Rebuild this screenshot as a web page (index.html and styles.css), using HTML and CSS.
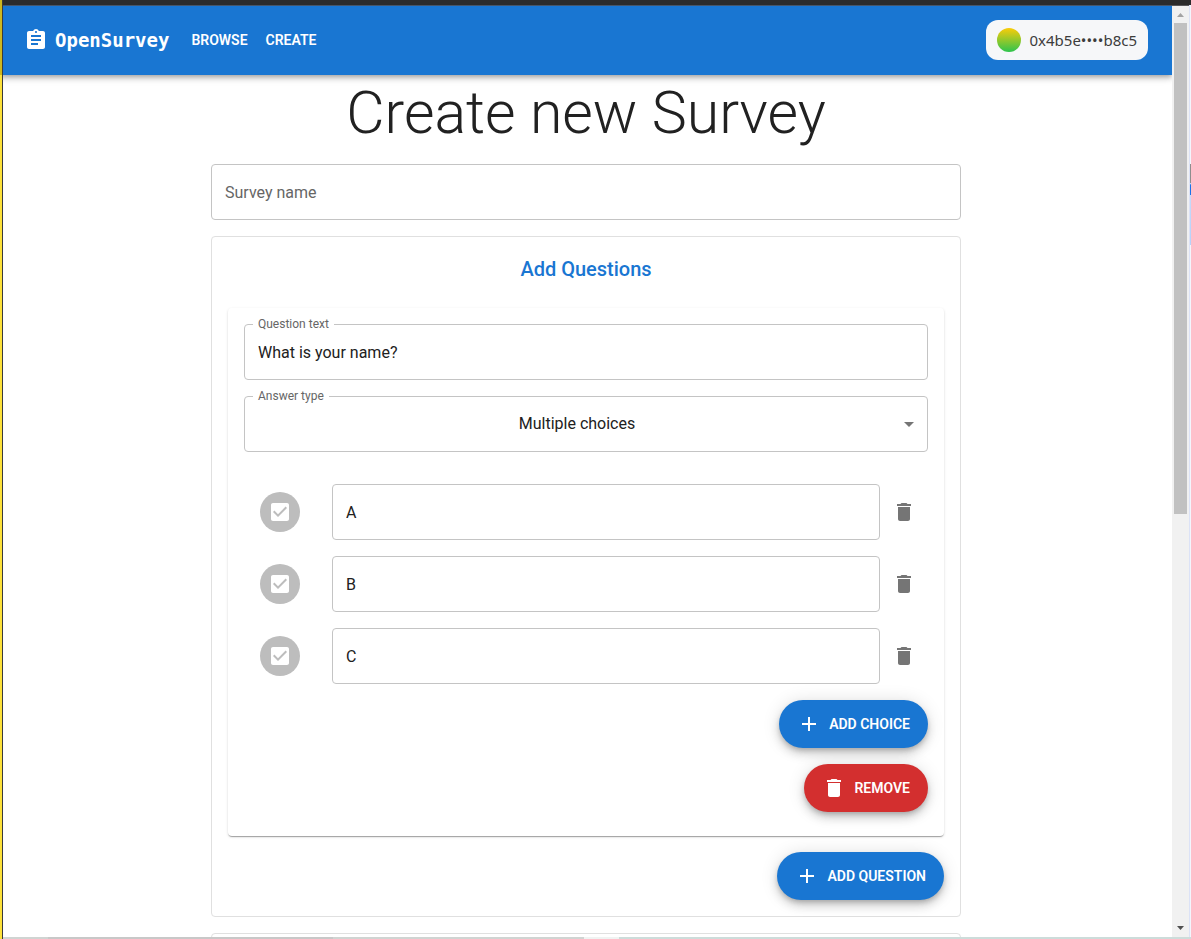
FILE: index.html
```html
<!DOCTYPE html>
<html lang="en">
<head>
<meta charset="utf-8">
<meta name="viewport" content="width=device-width, initial-scale=1">
<title>OpenSurvey</title>
<link rel="stylesheet" href="styles.css">
</head>
<body>
<svg class="sprite" aria-hidden="true">
  <symbol id="icon-survey" viewBox="0 0 24 24"><path d="M19 3h-4.180C14.400 1.840 13.300 1 12 1c-1.300 0-2.400.84-2.820 2H5c-1.100 0-2 .9-2 2v14c0 1.100.9 2 2 2h14c1.100 0 2-.9 2-2V5c0-1.100-.9-2-2-2zm-7 0c.55 0 1 .45 1 1s-.45 1-1 1-1-.45-1-1 .45-1 1-1zm2 14H7v-2h7v2zm3-4H7v-2h10v2zm0-4H7V7h10v2z"/></symbol>
  <symbol id="icon-plus" viewBox="0 0 24 24"><path d="M19 13h-6v6h-2v-6H5v-2h6V5h2v6h6v2z"/></symbol>
  <symbol id="icon-trash" viewBox="0 0 24 24"><path d="M6 19c0 1.100.9 2 2 2h8c1.100 0 2-.9 2-2V7H6v12zM19 4h-3.500l-1-1h-5l-1 1H5v2h14V4z"/></symbol>
  <symbol id="icon-check" viewBox="0 0 24 24"><path fill-rule="evenodd" d="M19 3H5c-1.110 0-2 .9-2 2v14c0 1.100.89 2 2 2h14c1.110 0 2-.9 2-2V5c0-1.100-.89-2-2-2zm-9 14l-5-5 1.410-1.410L10 14.170l7.590-7.590L19 8l-9 9z"/></symbol>
  <symbol id="icon-arrow" viewBox="0 0 24 24"><path d="M7 10l5 5 5-5z"/></symbol>
</svg>
<div class="window">
  <div class="window-top"></div>
  <div class="viewport">
    <div class="page">
      <header class="appbar">
        <a class="brand" href="#"><svg class="icon"><use href="#icon-survey"/></svg>OpenSurvey</a>
        <nav class="nav"><a href="#">BROWSE</a><a href="#">CREATE</a></nav>
        <button class="wallet" type="button"><span class="wallet-avatar"></span>0x4b5e••••b8c5</button>
      </header>
      <main class="content">
        <h1 class="title">Create new Survey</h1>
        <form class="stack">
          <div class="field"><input class="control" type="text" aria-label="Survey name" placeholder="Survey name"></div>
          <section class="card">
            <h2 class="card-title">Add Questions</h2>
            <div class="paper">
              <div class="field">
                <label class="label" for="question">Question text</label>
                <input class="control" id="question" type="text" value="What is your name?">
              </div>
              <div class="field">
                <label class="label" for="answer">Answer type</label>
                <select class="control select" id="answer"><option>Multiple choices</option></select>
                <svg class="icon select-arrow"><use href="#icon-arrow"/></svg>
              </div>
              <div class="choices">
                <div class="choice">
                  <span class="avatar"><svg class="icon"><use href="#icon-check"/></svg></span>
                  <input class="control" type="text" aria-label="Choice 1" value="A">
                  <button class="delete" type="button" aria-label="Delete choice 1"><svg class="icon"><use href="#icon-trash"/></svg></button>
                </div>
                <div class="choice">
                  <span class="avatar"><svg class="icon"><use href="#icon-check"/></svg></span>
                  <input class="control" type="text" aria-label="Choice 2" value="B">
                  <button class="delete" type="button" aria-label="Delete choice 2"><svg class="icon"><use href="#icon-trash"/></svg></button>
                </div>
                <div class="choice">
                  <span class="avatar"><svg class="icon"><use href="#icon-check"/></svg></span>
                  <input class="control" type="text" aria-label="Choice 3" value="C">
                  <button class="delete" type="button" aria-label="Delete choice 3"><svg class="icon"><use href="#icon-trash"/></svg></button>
                </div>
              </div>
              <button class="fab" type="button"><svg class="icon"><use href="#icon-plus"/></svg>ADD CHOICE</button>
              <button class="fab fab-danger" type="button"><svg class="icon"><use href="#icon-trash"/></svg>REMOVE</button>
            </div>
            <button class="fab" type="button"><svg class="icon"><use href="#icon-plus"/></svg>ADD QUESTION</button>
          </section>
          <section class="card"></section>
        </form>
      </main>
    </div>
    <div class="scrollbar" aria-hidden="true">
      <svg class="scroll-arrow scroll-arrow-off" viewBox="0 0 17 17"><path d="M5 11h7L8.500 7z"/></svg>
      <div class="scroll-track"><div class="scroll-thumb"></div></div>
      <svg class="scroll-arrow" viewBox="0 0 17 17"><path d="M5 6h7L8.500 10z"/></svg>
    </div>
    <div class="window-right"></div>
  </div>
  <div class="window-bottom"></div>
  <div class="window-left"></div>
</div>
</body>
</html>
```
FILE: styles.css
```css
* { box-sizing: border-box; }

body {
  margin: 0;
  background: #fff;
  color: #212121;
  font: 400 16px/24px Roboto, "Liberation Sans", sans-serif;
}

button, input, select { font: inherit; color: inherit; }
a { color: inherit; text-decoration: none; }
.sprite { display: none; }

.icon {
  display: block;
  flex: none;
  width: 24px;
  height: 24px;
  fill: currentColor;
}

/* Window frame */
.window {
  position: relative;
  display: flex;
  flex-direction: column;
  height: 100vh;
  overflow: hidden;
}
.window-top { flex: none; height: 5px; background: #2b2b2b; }
.window-bottom {
  flex: none;
  height: 2px;
  background: linear-gradient(90deg, #d0d4d2 4%, #c8c8c8 4%, #c8c8c8 28%, #d0d4d2 28%, #d0d4d2 49%, #f0f3f2 49%, #f0f3f2 52%, #cddcda 52%);
}
.window-left {
  position: absolute;
  inset: 0 auto 0 0;
  width: 3px;
  border-right: 1px solid #3a3a3a;
  background: linear-gradient(#cdb81f 75px, #fde13a 75px);
}
.window-right {
  flex: none;
  width: 2px;
  border-left: 1px solid #dbe2f6;
  background: linear-gradient(#f3f6fd 159px, #8e8e8e 159px, #8e8e8e 178px, #f3f6fd 178px, #1a73e8 180px, #1a73e8 190px, #c5dafa 190px, #b5d2fa 240px, #f3f6fd 240px);
}
.viewport { display: flex; flex: 1; min-height: 0; }
.page { flex: 1; min-width: 0; overflow: hidden; }

.scrollbar {
  display: flex;
  flex-direction: column;
  flex: none;
  width: 17px;
  border-top: 1px solid #58585a;
  background: #f1f1f1;
}
.scroll-arrow { display: block; width: 17px; height: 17px; fill: #505050; }
.scroll-arrow-off { fill: #a3a3a3; }
.scroll-track { flex: 1; padding: 0 2px; }
.scroll-thumb { height: 54.7%; background: #c1c1c1; }

/* App bar */
.appbar {
  position: relative;
  display: flex;
  align-items: center;
  height: 70px;
  padding: 0 24px 2px;
  border-top: 1px solid #46566a;
  background: #1976d2;
  box-shadow: 0 2px 4px -1px rgba(0,0,0,.2), 0 4px 5px rgba(0,0,0,.14), 0 1px 10px rgba(0,0,0,.12);
  color: #fff;
}
.brand {
  display: flex;
  align-items: center;
  gap: 7px;
  font: 700 19px/32px "DejaVu Sans Mono", monospace;
}
.nav {
  display: flex;
  gap: 18px;
  margin-left: 22px;
  font-size: 14px;
  font-weight: 600;
}
.wallet {
  display: flex;
  align-items: center;
  gap: 8px;
  height: 40px;
  margin-left: auto;
  padding: 0 11px;
  border: 0;
  border-radius: 12px;
  background: #f6f7f9;
  color: #3c3c3c;
  font: 400 15px/24px "Noto Sans", sans-serif;
}
.wallet-avatar {
  width: 24px;
  height: 24px;
  border-radius: 50%;
  background: linear-gradient(#fbcc09, #2dc44e);
}

/* Form */
.content { max-width: 750px; margin: 0 auto; }
.title {
  margin: 0 0 13px;
  font-size: 59px;
  font-weight: 300;
  line-height: 76px;
  text-align: center;
}
.stack { display: flex; flex-direction: column; gap: 16px; }
.card {
  display: flex;
  flex-direction: column;
  align-items: flex-end;
  gap: 16px;
  padding: 16px;
  border: 1px solid #e0e0e0;
  border-radius: 4px;
}
.card-title {
  align-self: center;
  margin: 0 0 7px;
  color: #1976d2;
  font-size: 20px;
  font-weight: 500;
  line-height: 32px;
}
.paper {
  display: flex;
  flex-direction: column;
  align-items: flex-end;
  gap: 16px;
  width: 100%;
  padding: 16px 16px 24px;
  border-radius: 4px;
  box-shadow: 0 2px 1px -1px rgba(0,0,0,.2), 0 1px 1px rgba(0,0,0,.14), 0 1px 3px rgba(0,0,0,.12);
}
.field { position: relative; width: 100%; }
.label {
  position: absolute;
  top: -8px;
  left: 9px;
  padding: 0 5px;
  background: #fff;
  color: #666;
  font-size: 12px;
  line-height: 16px;
}
.control {
  display: block;
  width: 100%;
  min-width: 0;
  height: 56px;
  padding: 0 13px;
  border: 1px solid #c4c4c4;
  border-radius: 4px;
  background: none;
}
.control::placeholder { color: #666; opacity: 1; }
.select {
  appearance: none;
  padding-right: 31px;
  text-align: center;
  text-align-last: center;
}
.select-arrow {
  position: absolute;
  top: 16px;
  right: 7px;
  color: #757575;
  pointer-events: none;
}
.choices {
  display: flex;
  flex-direction: column;
  gap: 16px;
  width: 100%;
  padding-top: 16px;
}
.choice { display: flex; align-items: center; padding: 0 12px 0 16px; }
.avatar {
  display: flex;
  align-items: center;
  justify-content: center;
  flex: none;
  width: 40px;
  height: 40px;
  margin-right: 32px;
  border-radius: 50%;
  background: #bdbdbd;
  color: #fff;
}
.delete {
  margin-left: 12px;
  padding: 0;
  border: 0;
  background: none;
  color: #757575;
}
.fab {
  display: flex;
  align-items: center;
  gap: 8px;
  height: 48px;
  padding: 0 18px;
  border: 0;
  border-radius: 24px;
  background: #1976d2;
  box-shadow: 0 3px 5px -1px rgba(0,0,0,.2), 0 6px 10px rgba(0,0,0,.14), 0 1px 18px rgba(0,0,0,.12);
  color: #fff;
  font-size: 14px;
  font-weight: 600;
}
.fab-danger { background: #d32f2f; }
```
